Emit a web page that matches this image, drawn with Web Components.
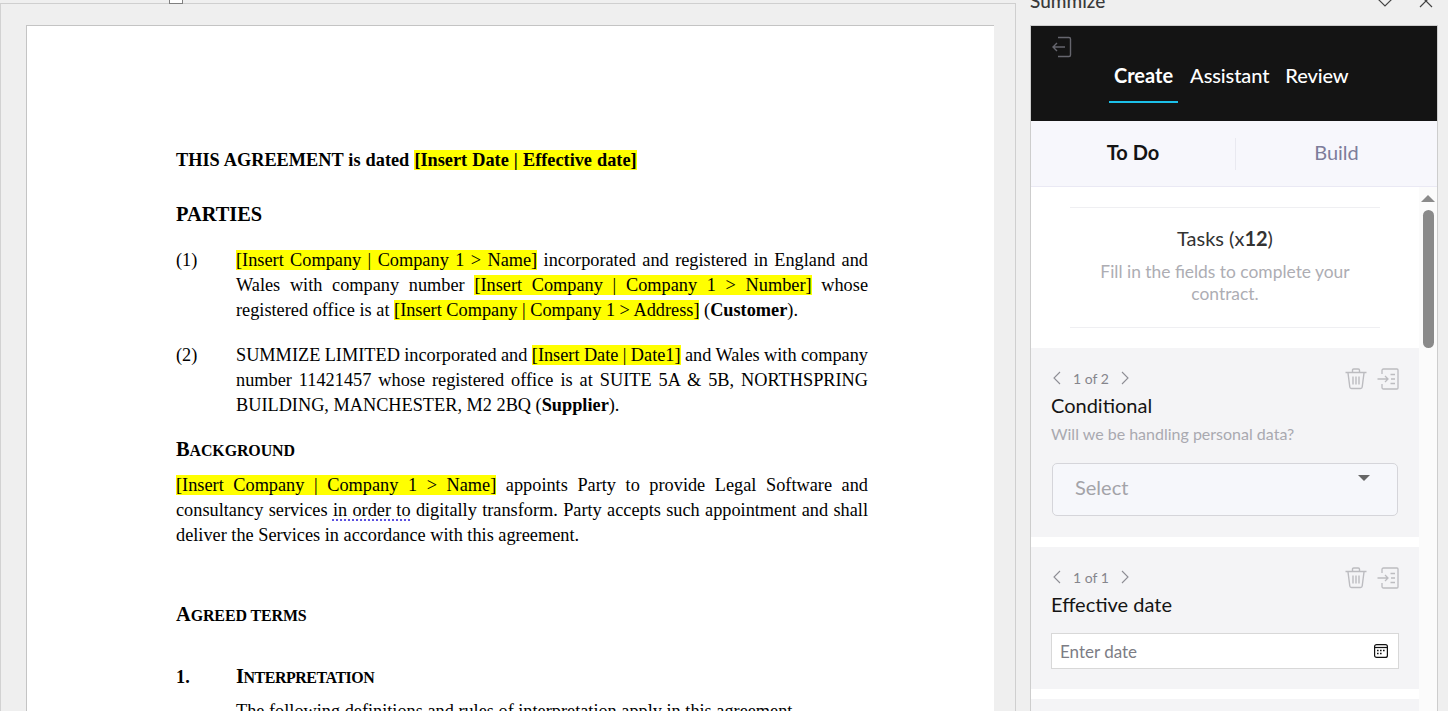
<!DOCTYPE html>
<html>
<head>
<meta charset="utf-8">
<title>Summize</title>
<style>
	html, body { margin: 0; height: 711px; overflow: hidden; background: #efefef; }
</style>
</head>
<body>
<app-shell>
	<doc-page slot="doc">
		<doc-para style="--ws:0.5px"><b>THIS AGREEMENT is dated <doc-field>[Insert Date | Effective date]</doc-field></b></doc-para>
		<doc-para style="--gap:29px;--size:20.4px"><b>PARTIES</b></doc-para>
		<doc-clause style="--gap:21px" num="(1)"><doc-field>[Insert Company | Company 1 &gt; Name]</doc-field> incorporated and registered in England and Wales with company number <doc-field>[Insert Company | Company 1 &gt; Number]</doc-field> whose registered office is at <doc-field>[Insert Company | Company 1 &gt; Address]</doc-field> (<b>Customer</b>).</doc-clause>
		<doc-clause style="--gap:20px" num="(2)"><doc-line style="--ws:-1.7px">SUMMIZE LIMITED incorporated and <doc-field>[Insert Date | Date1]</doc-field> and Wales with company</doc-line>number 11421457 whose registered office is at SUITE 5A &amp; 5B, NORTHSPRING BUILDING, MANCHESTER, M2 2BQ (<b>Supplier</b>).</doc-clause>
		<doc-para style="--gap:20px"><doc-heading><doc-cap>B</doc-cap>ackground</doc-heading></doc-para>
		<doc-para style="--gap:10px"><doc-field>[Insert Company | Company 1 &gt; Name]</doc-field> appoints Party to provide Legal Software and consultancy services <doc-squiggle>in order to</doc-squiggle> digitally transform. Party accepts such appointment and shall deliver the Services in accordance with this agreement.</doc-para>
		<doc-para style="--gap:55px"><doc-heading><doc-cap>A</doc-cap>greed terms</doc-heading></doc-para>
		<doc-clause style="--gap:37px" num="1."><doc-heading style="--track:-0.45px"><doc-cap>I</doc-cap>nterpretation</doc-heading></doc-clause>
		<doc-clause style="--gap:9px" num="">The following definitions and rules of interpretation apply in this agreement.</doc-clause>
	</doc-page>
	<summize-panel slot="panel">
		<panel-intro></panel-intro>
		<task-card pager="1 of 2" heading="Conditional" question="Will we be handling personal data?" style="--card-h:189px">
			<select-box>Select</select-box>
		</task-card>
		<task-card pager="1 of 1" heading="Effective date" style="--card-h:142px">
			<date-box>Enter date</date-box>
		</task-card>
		<task-card style="--card-h:60px"></task-card>
	</summize-panel>
</app-shell>

<script>
	/** Small helper: every element gets an open shadow root from a template string. */
	function define(name, html, observe) {
		const template = document.createElement("template");
		template.innerHTML = html.trim();
		customElements.define(name, class extends HTMLElement {
			constructor() {
				super();
				this.attachShadow({ mode: "open" }).appendChild(template.content.cloneNode(true));
			}
			connectedCallback() {
				if (observe) observe(this, this.shadowRoot);
			}
		});
	}

	// ─── Document side ───────────────────────────────────────────────────────

	define("app-shell", `
		<style>
			:host { display: grid; grid-template-columns: 1016px 432px; height: 711px; overflow: hidden; }
			.left { position: relative; padding-top: 3px; box-sizing: border-box; height: 711px; overflow: hidden; }
			.frame { border-top: 1px solid #cfcfcf; border-left: 1px solid #d2d2d2; border-right: 1px solid #cfcfcf; height: 708px; box-sizing: border-box; padding: 21px 0 0 25px; overflow: hidden; background: #efefef; }
			.marker { position: absolute; left: 169px; top: -2px; width: 12px; height: 4px; background: #fff; border: 1px solid #808080; }
		</style>
		<div class="left">
			<div class="marker"></div>
			<div class="frame"><slot name="doc"></slot></div>
		</div>
		<slot name="panel"></slot>
	`);

	define("doc-page", `
		<style>
			:host { display: block; width: 968px; height: 700px; box-sizing: border-box; background: #fff; border-top: 1px solid #c4c4c4; border-left: 1px solid #c4c4c4; padding: 122px 126px 0 149px; font: 18.3px/25px "Liberation Serif", serif; color: #000; }
		</style>
		<slot></slot>
	`);

	define("doc-para", `
		<style>
			:host { display: block; margin-top: var(--gap, 0); text-align: justify; font-size: var(--size, inherit); word-spacing: var(--ws, 0); }
		</style>
		<slot></slot>
	`);

	define("doc-clause", `
		<style>
			:host { display: grid; grid-template-columns: 60px 1fr; margin-top: var(--gap, 0); text-align: justify; }
		</style>
		<div class="num"></div>
		<div><slot></slot></div>
	`, (el, root) => {
		const num = el.getAttribute("num");
		root.querySelector(".num").textContent = num;
		if (num === "1.") root.querySelector(".num").style.fontWeight = "bold";
	});

	// Word squeezes this line's spaces to keep the last word on it
	define("doc-line", `<style>:host { display: block; text-align-last: justify; word-spacing: var(--ws, 0); white-space: nowrap; }</style><slot></slot>`);

	define("doc-field", `<style>:host { display: inline; background: #ffff00; }</style><slot></slot>`);

	define("doc-heading", `<style>:host { display: inline; font-weight: bold; text-transform: uppercase; font-size: 15.95px; line-height: 1; letter-spacing: var(--track, -0.1px); }</style><slot></slot>`);

	define("doc-cap", `<style>:host { display: inline; font-size: 20.4px; line-height: 1; }</style><slot></slot>`);

	define("doc-squiggle", `<style>:host { display: inline; text-decoration: underline dotted #5a4fe0 2px; text-underline-offset: 3px; }</style><slot></slot>`);

	// ─── Summize panel ───────────────────────────────────────────────────────

	define("summize-panel", `
		<style>
			:host { display: block; height: 711px; overflow: hidden; padding-left: 14px; font-family: Lato, sans-serif; color: #141414; }
			.title { height: 25px; display: flex; align-items: flex-end; justify-content: space-between; width: 407px; overflow: hidden; }
			.title span { font-size: 19px; line-height: 22px; color: #3a3a3a; margin-bottom: 13px; font-weight: 500; }
			.title .win { display: flex; align-items: flex-end; gap: 27px; margin: 0 4px 15px 0; }
			.title .close { margin-bottom: 2px; }
			.box { width: 408px; box-sizing: border-box; height: 686px; border: 1px solid #cdcdcd; border-bottom: 0; background: #fff; overflow: hidden; display: flex; flex-direction: column; }
			.head { height: 95px; box-sizing: border-box; background: #141414; position: relative; flex: none; }
			.exit { position: absolute; left: 20px; top: 10px; }
			.tabs { position: absolute; left: 78px; top: 28px; display: flex; gap: 6px; }
			.tab { padding: 0 5px; height: 49px; line-height: 42px; font-size: 20px; letter-spacing: -0.1px; color: #fff; font-weight: 500; box-sizing: border-box; }
			.tab.on { border-bottom: 2px solid #1cc0e8; font-weight: 700; letter-spacing: 0; margin-right: 1px; }
			.sub { height: 66px; flex: none; box-sizing: border-box; background: #f7f7fc; border-bottom: 1px solid #eae9f4; display: grid; grid-template-columns: 204px 1fr; align-items: center; font-size: 20px; }
			.sub div { text-align: center; line-height: 28px; padding-bottom: 4px; }
			.sub .todo { font-weight: 700; color: #141414; }
			.sub .build { border-left: 1px solid #e9e9f0; color: #7d7d9a; }
			.body { flex: 1; display: flex; min-height: 0; }
			.content { width: 388px; flex: none; display: flex; flex-direction: column; gap: 10px; }
			.track { flex: 1; background: #fbfbfb; display: flex; flex-direction: column; align-items: center; padding-top: 8px; }
			.up { width: 0; height: 0; border-left: 7px solid transparent; border-right: 7px solid transparent; border-bottom: 7px solid #8a8a8a; margin-left: -1px; }
			.thumb { width: 11px; height: 138px; border-radius: 6px; background: #8a8a8a; margin-top: 8px; }
		</style>
		<div class="title">
			<span>Summize</span>
			<div class="win">
				<svg width="14" height="14" viewBox="0 0 14 14" fill="none" stroke="#444" stroke-width="1.2"><path d="M0 3l7 7 7-7"/></svg>
				<svg class="close" width="14" height="14" viewBox="0 0 14 14" fill="none" stroke="#444" stroke-width="1.2"><path d="M1 1l12 12M13 1L1 13"/></svg>
			</div>
		</div>
		<div class="box">
			<div class="head">
				<svg class="exit" width="21" height="22" viewBox="0 0 21 22" fill="none" stroke="#66666e" stroke-width="1.4"><path d="M7 1.500h11a1.500 1.500 0 0 1 1.500 1.500v16a1.500 1.500 0 0 1-1.500 1.500H7"/><path d="M14 11H2M6 7l-4 4 4 4"/></svg>
				<div class="tabs">
					<div class="tab on">Create</div>
					<div class="tab">Assistant</div>
					<div class="tab">Review</div>
				</div>
			</div>
			<div class="sub">
				<div class="todo">To Do</div>
				<div class="build">Build</div>
			</div>
			<div class="body">
				<div class="content"><slot></slot></div>
				<div class="track"><div class="up"></div><div class="thumb"></div></div>
			</div>
		</div>
	`);

	define("panel-intro", `
		<style>
			:host { display: block; flex: none; height: 151px; padding-top: 20px; box-sizing: border-box; }
			.in { margin: 0 39px; height: 121px; border-top: 1px solid #efeff2; border-bottom: 1px solid #efeff2; text-align: center; box-sizing: border-box; width: 310px; }
			h2 { font-size: 20px; font-weight: 400; color: #333; margin: 16px 0 9px; line-height: 28px; }
			b { font-weight: 700; }
			p { font-size: 17.4px; line-height: 22px; color: #adadb3; margin: 0; }
		</style>
		<div class="in">
			<h2>Tasks (x<b>12</b>)</h2>
			<p>Fill in the fields to complete your contract.</p>
		</div>
	`);

	define("task-card", `
		<style>
			:host { display: block; height: var(--card-h, 100px); background: #f4f4f6; box-sizing: border-box; padding: 20px 20px 0 20px; position: relative; flex: none; }
			.top { display: flex; align-items: center; height: 20px; margin-left: 1px; font-size: 14px; color: #85858c; }
			.top span { margin: 0 11px; }
			.acts { position: absolute; right: 20px; top: 20px; display: flex; gap: 10px; }
			h3 { margin: 3px 0 0; font-size: 20px; font-weight: 400; line-height: 28px; color: #141414; }
			p { margin: 4px 0 0; font-size: 16px; line-height: 22px; color: #a9a9b0; }
		</style>
		<div class="wrap">
			<div class="top">
				<svg width="10" height="14" viewBox="0 0 10 14" fill="none" stroke="#8d8d94" stroke-width="1.1"><path d="M8 1L2 7l6 6"/></svg>
				<span class="pager"></span>
				<svg width="10" height="14" viewBox="0 0 10 14" fill="none" stroke="#8d8d94" stroke-width="1.1"><path d="M2 1l6 6-6 6"/></svg>
			</div>
			<div class="acts">
				<svg width="22" height="22" viewBox="0 0 22 22" fill="none" stroke="#bcbcc0" stroke-width="1.4"><path d="M0.500 4.500h21M7.500 4V2.200c0-.7.500-1.200 1.200-1.200h4.600c.7 0 1.200.5 1.200 1.200V4M3 5l1.800 14c.1 1 .8 1.500 1.700 1.500h9c.9 0 1.600-.5 1.700-1.500L19 5M8 8.500v8M11 8.500v8M14 8.500v8"/></svg>
				<svg width="22" height="22" viewBox="0 0 22 22" fill="none" stroke="#bcbcc0" stroke-width="1.300"><path d="M5 6V2.500C5 1.700 5.500 1 6.500 1h13.500c.6 0 1 .5 1 1v18c0 .5-.4 1-1 1H6.500C5.500 21 5 20.300 5 19.500V16"/><path d="M0.500 11H11M8 8l3 3-3 3M13.500 6.500H18M14 11h4M13.500 15.500H18"/></svg>
			</div>
			<h3></h3>
			<p></p>
			<slot></slot>
		</div>
	`, (el, root) => {
		const pager = el.getAttribute("pager");
		if (!pager) {
			root.querySelector(".wrap").style.display = "none";
			return;
		}
		root.querySelector(".pager").textContent = pager;
		root.querySelector("h3").textContent = el.getAttribute("heading");
		const question = el.getAttribute("question");
		const p = root.querySelector("p");
		if (question) p.textContent = question;
		else p.remove();
	});

	define("select-box", `
		<style>
			:host { display: block; position: relative; margin: 18px 1px 0 1px; width: 346px; height: 53px; box-sizing: border-box; background: #f6f7fb; border: 1px solid #d5d5da; border-radius: 5px; padding-left: 22px; line-height: 47px; font-size: 20px; color: #a3a3a8; }
			.caret { position: absolute; right: 27px; top: 11px; width: 0; height: 0; border-left: 6px solid transparent; border-right: 6px solid transparent; border-top: 6px solid #666; }
		</style>
		<slot></slot>
		<div class="caret"></div>
	`);

	define("date-box", `
		<style>
			:host { display: flex; align-items: center; justify-content: space-between; margin-top: 15px; width: 348px; height: 36px; box-sizing: border-box; background: #fff; border: 1px solid #d8d8d8; padding: 0 10px 0 8px; font-size: 17px; color: #7d7d85; }
		</style>
		<span><slot></slot></span>
		<svg width="14" height="14" viewBox="0 0 14 14" fill="none" stroke="#111" stroke-width="1.2"><rect x="0.600" y="0.600" width="12.800" height="12.800" rx="2"/><path d="M0.600 3.500h12.800"/><path stroke-width="1.600" stroke-dasharray="1.600 1.400" d="M3 6.500h8M3 9.500h6"/></svg>
	`);
</script>
</body>
</html>
